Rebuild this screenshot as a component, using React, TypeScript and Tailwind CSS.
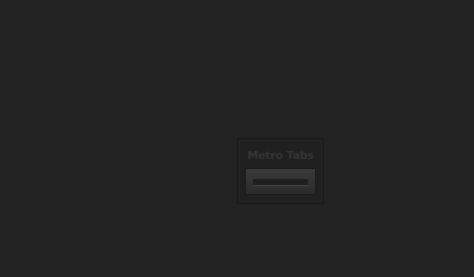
const App = () => {
  return (
    <div className="w-[474px] h-[277px] bg-[#222222] overflow-hidden font-['DejaVu_Sans',sans-serif]">
      <div className="pt-[138px] pl-[237px]">
        <div className="w-[87px] h-[66px] bg-[#202020] border border-[#1a1a1a] p-[1px]">
          <div className="h-full border border-[#252525] flex flex-col items-center pt-[8px]">
            <h1 className="text-[11px] leading-[13px] font-bold text-[#333333] tracking-[-0.2px]">Metro Tabs</h1>
            <button className="mt-[6px] w-[71px] h-[27px] rounded-[2px] bg-gradient-to-b from-[#3a3a3a] to-[#2b2b2b] border border-[#1c1c1c] flex items-end justify-center pb-[8px]">
              <span className="block w-[55px] h-[7px] bg-[#1f1f1f] border-b border-[#444444] rounded-[1px]" />
            </button>
          </div>
        </div>
      </div>
    </div>
  );
};

export default App;
